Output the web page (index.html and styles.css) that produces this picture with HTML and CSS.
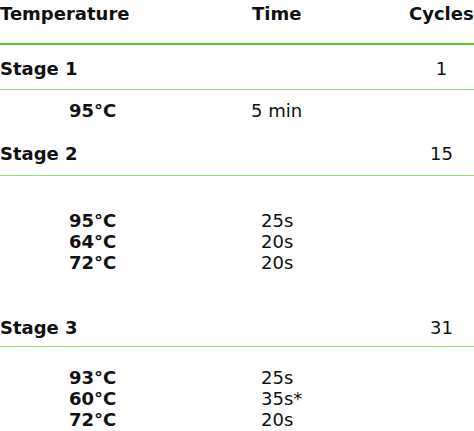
FILE: index.html
```html
<!DOCTYPE html>
<html>
<head>
<meta charset="utf-8">
<link rel="stylesheet" href="styles.css">
</head>
<body>
<div class="table">
  <div class="row head">
    <div class="c1">Temperature</div>
    <div class="c2">Time</div>
    <div class="c3">Cycles</div>
  </div>
  <div class="rule thick"></div>

  <div class="row stage s1">
    <div class="c1">Stage 1</div>
    <div class="c2"></div>
    <div class="c3 num">1</div>
  </div>
  <div class="rule"></div>
  <div class="row detail d1">
    <div class="c1 temps"><span>95°C</span></div>
    <div class="c2 times first"><span>5 min</span></div>
    <div class="c3"></div>
  </div>

  <div class="row stage s2">
    <div class="c1">Stage 2</div>
    <div class="c2"></div>
    <div class="c3 num">15</div>
  </div>
  <div class="rule"></div>
  <div class="row detail d2">
    <div class="c1 temps"><span>95°C</span><span>64°C</span><span>72°C</span></div>
    <div class="c2 times"><span>25s</span><span>20s</span><span>20s</span></div>
    <div class="c3"></div>
  </div>

  <div class="row stage s3">
    <div class="c1">Stage 3</div>
    <div class="c2"></div>
    <div class="c3 num">31</div>
  </div>
  <div class="rule"></div>
  <div class="row detail d3">
    <div class="c1 temps"><span>93°C</span><span>60°C</span><span>72°C</span></div>
    <div class="c2 times"><span>25s</span><span>35s*</span><span>20s</span></div>
    <div class="c3"></div>
  </div>
</div>
</body>
</html>
```
FILE: styles.css
```css
html, body {
  margin: 0;
  padding: 0;
  background: #ffffff;
  overflow: hidden;
}
.table {
  width: 500px;
  font-family: "DejaVu Sans", Verdana, sans-serif;
  font-size: 18px;
  line-height: 21px;
  color: #111111;
}
.row {
  display: grid;
  grid-template-columns: 251px 158px 91px;
}
.head {
  font-weight: bold;
  padding-top: 3px;
  padding-bottom: 19px;
}
.head .c2 {
  padding-left: 1px;
}
.rule {
  height: 1px;
  background: #98dc70;
}
.rule.thick {
  height: 2px;
  background: #5ccb34;
}
.stage .c1 {
  font-weight: bold;
}
.s1 { padding-top: 13px; padding-bottom: 10px; }
.s2 { padding-top: 22px; padding-bottom: 11px; }
.s3 { padding-top: 44px; padding-bottom: 8px; }
.d1 { padding-top: 10px; }
.d2 { padding-top: 34px; }
.d3 { padding-top: 20px; }
.num {
  width: 65px;
  text-align: center;
}
.temps {
  display: flex;
  flex-direction: column;
  font-weight: bold;
  padding-left: 69px;
}
.times {
  display: flex;
  flex-direction: column;
  padding-left: 10px;
}
.times.first {
  padding-left: 0;
}
```
